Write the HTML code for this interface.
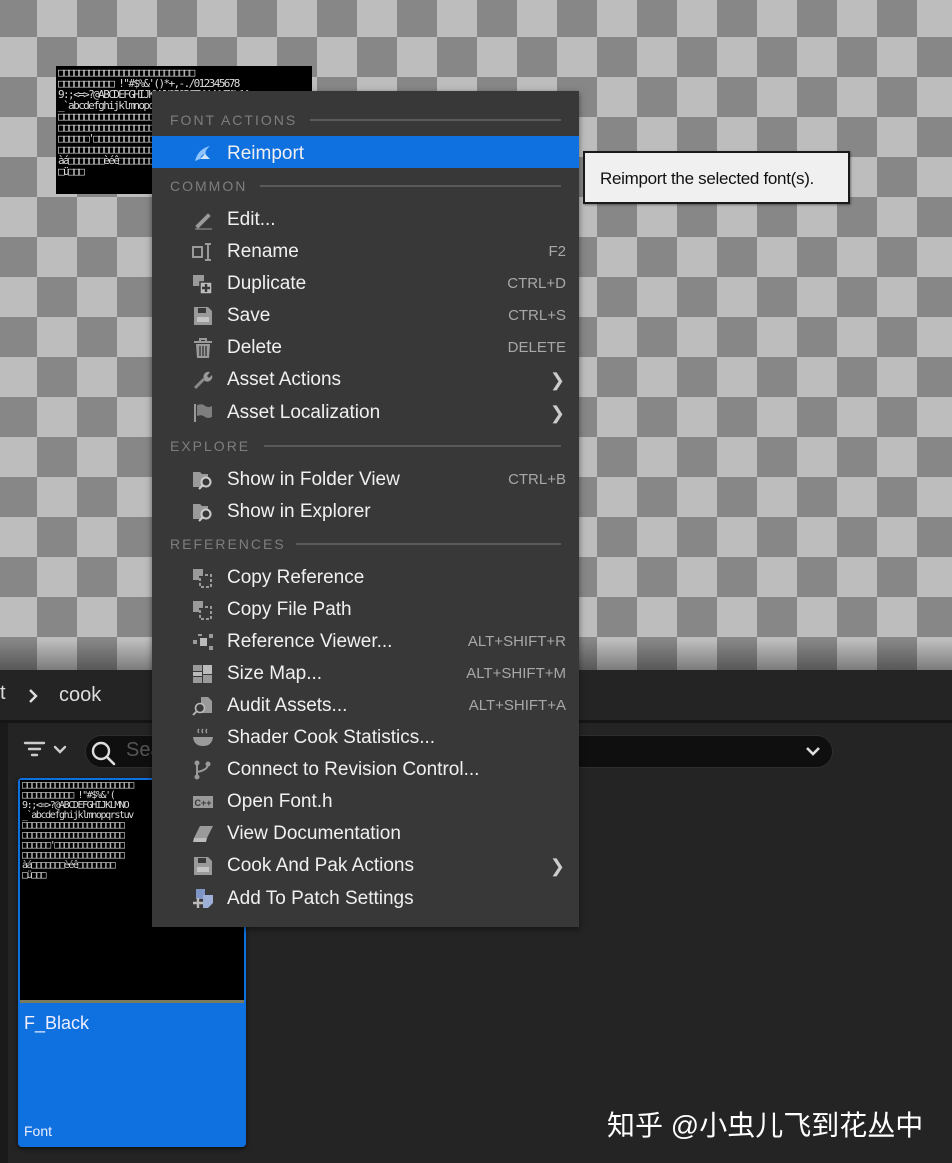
<!DOCTYPE html>
<html><head><meta charset="utf-8"><style>
*{margin:0;padding:0;box-sizing:border-box}
body{width:952px;height:1163px;overflow:hidden;position:relative;font-family:"Liberation Sans","Noto Sans CJK SC",sans-serif;background:conic-gradient(#bdbdbd 0 25%,#878787 0 50%,#bdbdbd 0 75%,#878787 0);background-size:80px 80px;background-position:-3px -3px}
.abs{position:absolute}
.atlas{background:#000;color:#ddd;font-family:"DejaVu Sans Mono",monospace;font-size:11px;line-height:11px;overflow:hidden;white-space:pre;padding:1px 2px;letter-spacing:-1.6px}
.shade{left:0;top:640px;width:952px;height:30px;background:linear-gradient(rgba(0,0,0,0),rgba(0,0,0,.35))}
.panel{left:0;top:670px;width:952px;height:493px;background:#242424}
.menu{left:152px;top:91px;width:427px;height:836px;background:#383838;box-shadow:0 2px 6px rgba(0,0,0,.5)}
.it{position:absolute;left:0;width:427px;height:32px;color:#f0f0f0;font-size:19px;line-height:36px}
.it .t{position:absolute;left:75px}
.it .k{position:absolute;right:13px;font-size:15px;color:#a8a8a8}
.it .a{position:absolute;right:14px;top:0;color:#ccc;font-size:18px}
.it svg{position:absolute;left:40px;top:7px}
.hd{position:absolute;left:18px;color:#7e7e7e;font-size:14px;letter-spacing:2px;height:20px;line-height:22px}
.hd i{position:absolute;top:10px;height:2px;background:#5a5a5a}
.sel{background:#0f70e0}
</style></head><body>
<div class="abs atlas" style="left:56px;top:66px;width:256px;height:128px">□□□□□□□□□□□□□□□□□□□□□□□□□□□
□□□□□□□□□□□ !"#$%&'()*+,-./012345678
9:;<=>?@ABCDEFGHIJKLMNOPQRSTUVWXYZ[\]^
_`abcdefghijklmnopqrstuvwxyz{|}~
□□□□□□□□□□□□□□□□□□□□□□□□□□□
□□□□□□□□□□□□□□□□□□□□□□□□□□□
□□□□□□'□□□□□□□□□□□□□□□□□□□□
□□□□□□□□□□□□□□□□□□□□□□□□□□□
àá□□□□□□□èéê□□□□□□□□□□□□□
□ü□□□</div>
<div class="abs shade"></div>
<div class="abs panel">
  <div class="abs" style="left:0;top:50px;width:952px;height:3px;background:#151515"></div>
  <div class="abs" style="left:0;top:12px;color:#ddd;font-size:20px">t</div>
  <svg class="abs" style="left:26px;top:18px" width="14" height="16"><polyline points="4,2 10,8 4,14" stroke="#ddd" stroke-width="2.4" fill="none"/></svg>
  <div class="abs" style="left:59px;top:14px;color:#ddd;font-size:20px">cook</div>
  <div class="abs" style="left:0;top:53px;width:8px;height:440px;background:#1a1a1a"></div>
  <div class="abs" style="left:85px;top:65px;width:748px;height:33px;background:#0f0f0f;border-radius:17px;border:1px solid #2e2e2e"></div>
  <svg class="abs" style="left:22px;top:70px" width="50" height="22"><g stroke="#ccc" stroke-width="2.4" fill="none" stroke-linecap="round"><line x1="3" y1="3" x2="22" y2="3"/><line x1="7" y1="9" x2="18" y2="9"/><line x1="10" y1="15" x2="15" y2="15"/><polyline points="33,7 38,12 43,7"/></g></svg>
  <svg class="abs" style="left:90px;top:70px" width="28" height="26"><circle cx="11" cy="11" r="8" stroke="#ddd" stroke-width="2.4" fill="none"/><line x1="17" y1="17" x2="24" y2="24" stroke="#ddd" stroke-width="2.6" stroke-linecap="round"/></svg>
  <div class="abs" style="left:126px;top:69px;color:#555;font-size:20px">Sea</div>
  <svg class="abs" style="left:803px;top:73px" width="20" height="16"><polyline points="4,5 10,11 16,5" stroke="#ddd" stroke-width="2.6" fill="none"/></svg>
  <div class="abs" style="left:18px;top:108px;width:228px;height:369px;background:#0f70e0;border-radius:4px;box-shadow:0 2px 4px rgba(0,0,0,.6)"></div>
  <div class="abs atlas" style="left:20px;top:110px;width:224px;height:220px;font-size:10px;line-height:10px;letter-spacing:-1.4px">□□□□□□□□□□□□□□□□□□□□□□□□
□□□□□□□□□□□ !"#$%&'(
9:;<=>?@ABCDEFGHIJKLMNO
_`abcdefghijklmnopqrstuv
□□□□□□□□□□□□□□□□□□□□□□
□□□□□□□□□□□□□□□□□□□□□□
□□□□□□'□□□□□□□□□□□□□□□
□□□□□□□□□□□□□□□□□□□□□□
àá□□□□□□□èéê□□□□□□□□
□ü□□□</div>
  <div class="abs" style="left:20px;top:330px;width:224px;height:3px;background:#7a7a60"></div>
  <div class="abs" style="left:24px;top:343px;color:#eef;font-size:18px">F_Black</div>
  <div class="abs" style="left:24px;top:453px;color:#eef;font-size:14px">Font</div>
  <div class="abs" style="left:607px;top:434px;color:#fff;font-size:28px;font-family:'Liberation Sans','Noto Sans CJK SC',sans-serif">知乎 @小虫儿飞到花丛中</div>
</div>
<div class="abs" style="left:583px;top:151px;width:267px;height:53px;background:#f0f0f0;border:2px solid #1a1a1a;box-shadow:1px 1px 2px rgba(0,0,0,.4);font-size:17px;color:#111;line-height:51px;padding-left:15px;letter-spacing:-0.3px">Reimport the selected font(s).</div>
<div class="abs menu">
  <div class="hd" style="top:18px">FONT ACTIONS<i style="left:140px;width:251px"></i></div>
  <div class="it sel" style="top:45px"><svg width="22" height="22"><path d="M3 18 Q6 6 18 3 Q12 8 14 12 Q10 10 8 16 Z" fill="#8fc4ff"/><path d="M8 16 L18 16 L13 11Z" fill="#cfe6ff"/></svg><span class="t">Reimport</span></div>
  <div class="hd" style="top:84px">COMMON<i style="left:90px;width:301px"></i></div>
  <div class="it" style="top:111px"><svg width="22" height="22"><path d="M4 17 L16 5 L18 7 L6 19Z M3 20 H20" fill="#9a9a9a" stroke="#9a9a9a" stroke-width="1"/></svg><span class="t">Edit...</span></div>
  <div class="it" style="top:143px"><svg width="22" height="22"><rect x="1" y="6" width="9" height="10" fill="none" stroke="#9a9a9a" stroke-width="2"/><path d="M13 3 H19 M16 3 V19 M13 19 H19" stroke="#9a9a9a" stroke-width="2"/></svg><span class="t">Rename</span><span class="k">F2</span></div>
  <div class="it" style="top:175px"><svg width="22" height="22"><rect x="1" y="2" width="11" height="11" fill="#9a9a9a"/><rect x="8" y="9" width="12" height="12" fill="#bbb" stroke="#383838" stroke-width="1.5"/><path d="M14 11 V19 M10 15 H18" stroke="#383838" stroke-width="2.4"/></svg><span class="t">Duplicate</span><span class="k">CTRL+D</span></div>
  <div class="it" style="top:207px"><svg width="22" height="22"><path d="M2 2 H16 L20 6 V20 H2Z" fill="#9a9a9a"/><rect x="6" y="3" width="8" height="5" fill="#383838"/><rect x="5" y="12" width="12" height="5" fill="#c4c4c4"/></svg><span class="t">Save</span><span class="k">CTRL+S</span></div>
  <div class="it" style="top:239px"><svg width="22" height="22"><path d="M2 5 H20 M8 5 V2 H14 V5" stroke="#9a9a9a" stroke-width="2" fill="none"/><path d="M4 7 H18 L17 21 H5Z" fill="#9a9a9a"/><path d="M8 9 V19 M11 9 V19 M14 9 V19" stroke="#383838" stroke-width="1.4"/></svg><span class="t">Delete</span><span class="k">DELETE</span></div>
  <div class="it" style="top:271px"><svg width="22" height="22"><path d="M3 19 L12 10" stroke="#8a8a8a" stroke-width="3"/><path d="M12 10 A5 5 0 0 1 18 3 L15 7 L17 9 L20 6 A5 5 0 0 1 13 12Z" fill="#9a9a9a"/></svg><span class="t">Asset Actions</span><span class="a">❯</span></div>
  <div class="it" style="top:304px"><svg width="22" height="22"><path d="M3 2 V20" stroke="#9a9a9a" stroke-width="2"/><path d="M5 3 Q11 1 13 4 Q17 6 20 4 V15 Q16 17 13 15 Q10 12 5 14Z" fill="#7e7e7e"/></svg><span class="t">Asset Localization</span><span class="a">❯</span></div>
  <div class="hd" style="top:344px">EXPLORE<i style="left:94px;width:297px"></i></div>
  <div class="it" style="top:371px"><svg width="22" height="22"><path d="M1 3 H8 L10 5 H16 V18 H1Z" fill="#9a9a9a"/><circle cx="14" cy="13" r="4.5" fill="#383838" stroke="#ccc" stroke-width="2"/><path d="M11 16 L7 20" stroke="#ccc" stroke-width="2.2"/></svg><span class="t">Show in Folder View</span><span class="k">CTRL+B</span></div>
  <div class="it" style="top:403px"><svg width="22" height="22"><path d="M1 3 H8 L10 5 H16 V18 H1Z" fill="#9a9a9a"/><circle cx="14" cy="13" r="4.5" fill="#383838" stroke="#ccc" stroke-width="2"/><path d="M11 16 L7 20" stroke="#ccc" stroke-width="2.2"/></svg><span class="t">Show in Explorer</span></div>
  <div class="hd" style="top:442px">REFERENCES<i style="left:126px;width:265px"></i></div>
  <div class="it" style="top:469px"><svg width="22" height="22"><path d="M1 2 H11 V7 H7 V13 H1Z" fill="#9a9a9a"/><rect x="8" y="8" width="11" height="12" fill="none" stroke="#9a9a9a" stroke-width="2" stroke-dasharray="3 2"/></svg><span class="t">Copy Reference</span></div>
  <div class="it" style="top:501px"><svg width="22" height="22"><path d="M1 2 H11 V7 H7 V13 H1Z" fill="#9a9a9a"/><rect x="8" y="8" width="11" height="12" fill="none" stroke="#9a9a9a" stroke-width="2" stroke-dasharray="3 2"/></svg><span class="t">Copy File Path</span></div>
  <div class="it" style="top:533px"><svg width="22" height="22"><rect x="1" y="9" width="4" height="4" fill="#9a9a9a"/><rect x="8" y="7" width="7" height="8" fill="#bbb"/><rect x="17" y="3" width="4" height="4" fill="#9a9a9a"/><rect x="17" y="15" width="4" height="4" fill="#9a9a9a"/><rect x="6" y="3" width="4" height="2" fill="#9a9a9a"/></svg><span class="t">Reference Viewer...</span><span class="k">ALT+SHIFT+R</span></div>
  <div class="it" style="top:565px"><svg width="22" height="22"><rect x="1" y="2" width="9" height="6" fill="#9a9a9a"/><rect x="1" y="9" width="9" height="4" fill="#bbb"/><rect x="1" y="14" width="9" height="6" fill="#9a9a9a"/><rect x="11" y="2" width="9" height="9" fill="#bbb"/><rect x="11" y="12" width="9" height="8" fill="#9a9a9a"/></svg><span class="t">Size Map...</span><span class="k">ALT+SHIFT+M</span></div>
  <div class="it" style="top:597px"><svg width="22" height="22"><path d="M9 2 H16 L20 6 V18 H9Z" fill="#9a9a9a"/><circle cx="8" cy="13" r="4.5" fill="#383838" stroke="#bbb" stroke-width="1.6"/><path d="M5 16 L1 20" stroke="#bbb" stroke-width="1.8"/></svg><span class="t">Audit Assets...</span><span class="k">ALT+SHIFT+A</span></div>
  <div class="it" style="top:629px"><svg width="22" height="22"><path d="M7 2 Q5 4 7 6 M11 2 Q9 4 11 6 M15 2 Q13 4 15 6" stroke="#9a9a9a" stroke-width="1.4" fill="none"/><path d="M1 10 H21 Q20 19 11 19 Q2 19 1 10Z" fill="#9a9a9a"/></svg><span class="t">Shader Cook Statistics...</span></div>
  <div class="it" style="top:661px"><svg width="22" height="22"><circle cx="5" cy="4" r="2.5" fill="#9a9a9a"/><circle cx="5" cy="18" r="2.5" fill="#9a9a9a"/><circle cx="16" cy="5" r="2.5" fill="#9a9a9a"/><path d="M5 4 V18 M16 5 Q16 11 5 13" stroke="#9a9a9a" stroke-width="2" fill="none"/></svg><span class="t">Connect to Revision Control...</span></div>
  <div class="it" style="top:693px"><svg width="22" height="22"><rect x="1" y="5" width="20" height="12" fill="#9a9a9a"/><text x="2.5" y="15" font-size="9" font-family="Liberation Sans" font-weight="bold" fill="#383838">C++</text></svg><span class="t">Open Font.h</span></div>
  <div class="it" style="top:725px"><svg width="22" height="22"><path d="M8 3 H21 L15 15 H2Z" fill="#9a9a9a"/><path d="M2 15 H15 L14 19 H1Z" fill="#bbb"/></svg><span class="t">View Documentation</span></div>
  <div class="it" style="top:757px"><svg width="22" height="22"><path d="M2 2 H16 L20 6 V20 H2Z" fill="#9a9a9a"/><rect x="6" y="3" width="8" height="5" fill="#383838"/><rect x="5" y="12" width="12" height="5" fill="#c4c4c4"/></svg><span class="t">Cook And Pak Actions</span><span class="a">❯</span></div>
  <div class="it" style="top:790px"><svg width="22" height="22"><rect x="4" y="1" width="9" height="10" fill="#7f95c8"/><path d="M11 7 H21 V15 L16 20 H11Z" fill="#9fb0d8"/><path d="M6 10 V20 M1 15 H11" stroke="#bbb" stroke-width="2.4"/></svg><span class="t">Add To Patch Settings</span></div>
</div>
</body></html>
